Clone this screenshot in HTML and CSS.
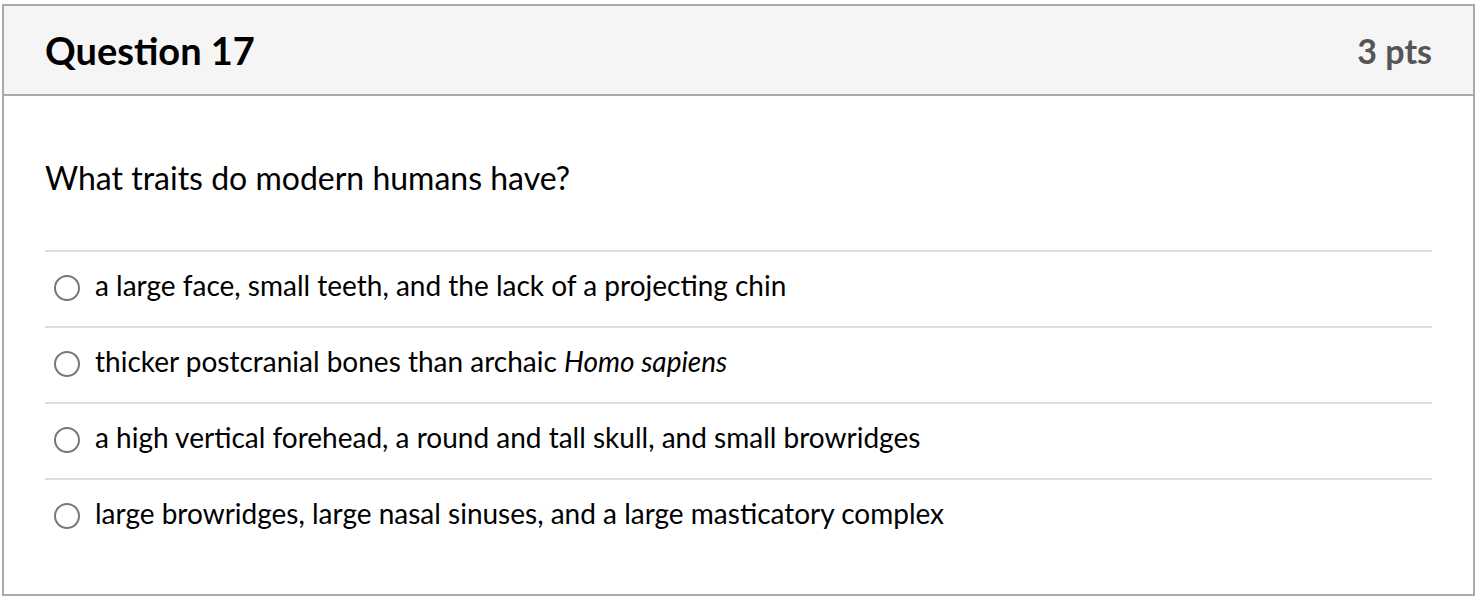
FILE: index.html
```html
<!DOCTYPE html>
<html lang="en">
<head>
<meta charset="utf-8">
<title>Question 17</title>
<link rel="stylesheet" href="styles.css">
</head>
<body>
<div class="question">
  <div class="question-header">
    <h2 class="question-title">Question 17</h2>
    <span class="question-points">3 pts</span>
  </div>
  <div class="question-body">
    <p class="question-text">What traits do modern humans have?</p>
    <div class="answers">
      <label class="answer"><span class="radio"></span><span class="answer-text">a large face, small teeth, and the lack of a projecting chin</span></label>
      <label class="answer"><span class="radio"></span><span class="answer-text">thicker postcranial bones than archaic <em>Homo sapiens</em></span></label>
      <label class="answer"><span class="radio"></span><span class="answer-text">a high vertical forehead, a round and tall skull, and small browridges</span></label>
      <label class="answer"><span class="radio"></span><span class="answer-text">large browridges, large nasal sinuses, and a large masticatory complex</span></label>
    </div>
  </div>
</div>
</body>
</html>
```
FILE: styles.css
```css
html, body {
  margin: 0;
  padding: 0;
  background: #fff;
}
body {
  padding: 4px 0 0 2px;
  font-family: Lato, "Open Sans", sans-serif;
  color: #000;
}
.question {
  width: 1473px;
  height: 592px;
  box-sizing: border-box;
  border: 2px solid #aaaaaa;
  display: flex;
  flex-direction: column;
}
.question-header {
  height: 90px;
  box-sizing: border-box;
  background: #f5f5f5;
  border-bottom: 2px solid #aaaaaa;
  display: flex;
  align-items: center;
  justify-content: space-between;
  padding: 0 41px;
}
.question-title {
  margin: 0;
  font-size: 38px;
  font-weight: 700;
  line-height: 44px;
  color: #000;
}
.question-points {
  font-size: 34px;
  font-weight: 700;
  color: #555;
  line-height: 44px;
  padding-top: 2px;
}
.question-body {
  padding: 0 41px;
}
.question-text {
  margin: 62px 0 52px;
  font-size: 32px;
  line-height: 40px;
}
.answers {
  display: flex;
  flex-direction: column;
}
.answer {
  height: 76px;
  box-sizing: border-box;
  border-top: 2px solid #dddddd;
  display: flex;
  align-items: center;
  padding-left: 9px;
  padding-bottom: 8px;
  gap: 15px;
  font-size: 28px;
}
.radio {
  width: 26px;
  height: 26px;
  box-sizing: border-box;
  border: 2px solid #777;
  border-radius: 50%;
  flex: none;
  margin-top: 5px;
}
.answer-text em {
  font-style: italic;
}
```
